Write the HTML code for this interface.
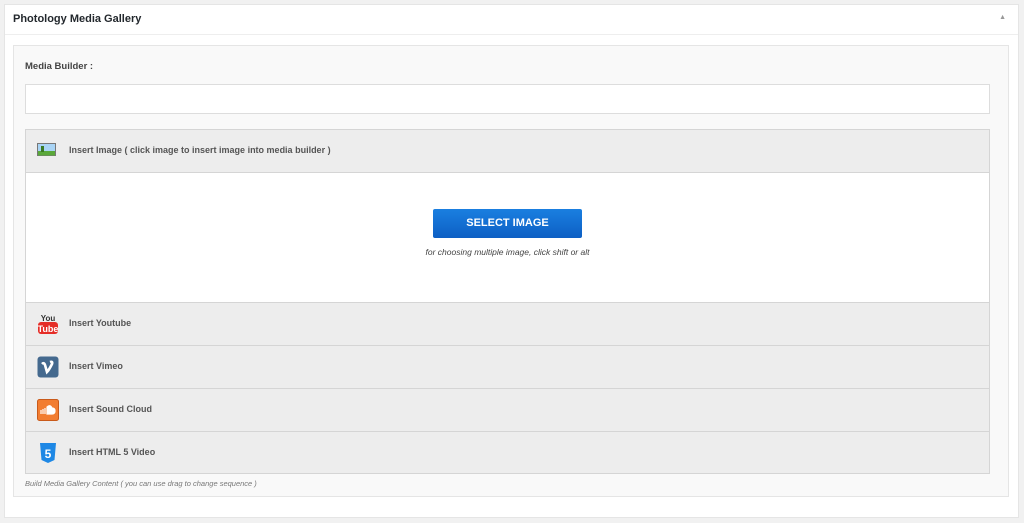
<!DOCTYPE html>
<html><head><style>
body{margin:0;width:1024px;height:523px;background:#f1f1f1;font-family:"Liberation Sans",sans-serif;position:relative;overflow:hidden}
.panel{position:absolute;left:4px;top:4px;width:1015px;height:514px;background:#fff;border:1px solid #e5e5e5;box-sizing:border-box}
.h{position:absolute;left:8px;top:8px;font-size:11px;font-weight:bold;color:#23282d}
.hl{position:absolute;left:0;right:0;top:29px;border-top:1px solid #eee}
.arrow{position:absolute;right:12px;top:9px;font-size:7px;color:#999}
.inner{position:absolute;left:13px;top:45px;width:996px;height:452px;background:#f9f9f9;border:1px solid #e5e5e5;box-sizing:border-box}
.lbl{position:absolute;left:25px;top:61px;font-size:9.5px;font-weight:bold;color:#444}
.inp{position:absolute;left:25px;top:84px;width:965px;height:30px;background:#fff;border:1px solid #ddd;box-sizing:border-box}
.acc{position:absolute;left:25px;top:129px;width:965px;height:345px;border:1px solid #d5d5d5;box-sizing:border-box;background:#ededed;overflow:hidden}
.row{position:absolute;left:0;right:0;height:43px;border-top:1px solid #d5d5d5;box-sizing:border-box;background:#ededed}
.row span{position:absolute;left:43px;top:15px;font-size:9px;font-weight:bold;color:#555}
.row .ic{position:absolute;left:11px;top:10px}
.content{position:absolute;left:0;right:0;top:42px;height:130px;background:#fff;border-top:1px solid #d5d5d5}
.btn{position:absolute;left:407px;top:36px;width:149px;height:29px;border-radius:2px;background:linear-gradient(#1a7fe0,#0d5fc4);color:#fff;font-size:11px;font-weight:bold;text-align:center;line-height:29px}
.note{position:absolute;left:0;right:0;top:74px;text-align:center;font-size:8.5px;font-style:italic;color:#444}
.foot{position:absolute;left:25px;top:479px;font-size:7.5px;font-style:italic;color:#777}
</style></head><body>
<div class="panel"><div class="h">Photology Media Gallery</div><div class="hl"></div><div class="arrow">▲</div></div>
<div class="inner"></div>
<div class="lbl">Media Builder :</div>
<div class="inp"></div>
<div class="acc">
 <div class="row" style="top:0;border-top:none"><svg class="ic" width="20" height="14" viewBox="0 0 20 14" style="top:13px"><rect x="0.5" y="0.5" width="18" height="12" fill="#a9d4f5" stroke="#777"/><rect x="1" y="8" width="17" height="4.5" fill="#5aa83a"/><rect x="4" y="3" width="3" height="6" fill="#3a7a25"/></svg><span>Insert Image ( click image to insert image into media builder )</span></div>
 <div class="content"><div class="btn">SELECT IMAGE</div><div class="note">for choosing multiple image, click shift or alt</div></div>
 <div class="row" style="top:172px"><svg class="ic" width="22" height="22" viewBox="0 0 22 22"><text x="11" y="8" font-size="8" font-weight="bold" text-anchor="middle" fill="#333" font-family="Liberation Sans">You</text><rect x="1" y="9" width="20" height="12" rx="3" fill="#e52d27"/><text x="11" y="19" font-size="9" font-weight="bold" text-anchor="middle" fill="#fff" font-family="Liberation Sans">Tube</text></svg><span>Insert Youtube</span></div>
 <div class="row" style="top:215px"><svg class="ic" width="22" height="22" viewBox="0 0 22 22"><rect x="0.5" y="0.5" width="21" height="21" rx="3" fill="#44698e"/><path d="M5 8 Q7 6 8 9 L10 16 Q12 14 15 8 Q16 5 13 6" stroke="#fff" stroke-width="2.6" fill="none"/></svg><span>Insert Vimeo</span></div>
 <div class="row" style="top:258px"><svg class="ic" width="22" height="22" viewBox="0 0 22 22"><rect x="0.5" y="0.5" width="21" height="21" rx="2" fill="#f27d31" stroke="#c95a1a"/><path d="M4 15 V11 M6 15 V10 M8 15 V9 M10 15 V8 Q13 5 15 9 Q18 9 18 12 Q18 15 15 15 Z" stroke="#fff" stroke-width="1.2" fill="#fff"/></svg><span>Insert Sound Cloud</span></div>
 <div class="row" style="top:301px"><svg class="ic" width="22" height="22" viewBox="0 0 22 22"><path d="M3 1 H19 L17.5 18 L11 21 L4.5 18 Z" fill="#1e88e5"/><text x="11" y="16" font-size="12" font-weight="bold" text-anchor="middle" fill="#fff" font-family="Liberation Sans">5</text></svg><span>Insert HTML 5 Video</span></div>
</div>
<div class="foot">Build Media Gallery Content ( you can use drag to change sequence )</div>
</body></html>
